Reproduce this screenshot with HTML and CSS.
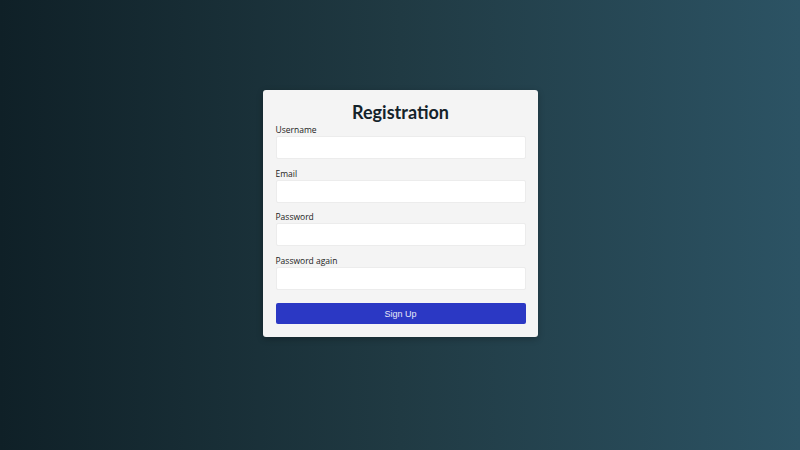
FILE: index.html
```html
<!DOCTYPE html>
<html lang="en">
<head>
  <meta charset="UTF-8" />
  <meta name="viewport" content="width=device-width, initial-scale=1.0" />
  <title>Registration</title>
  <link rel="stylesheet" href="styles.css">
</head>
<body>

  <div class="page">
    <form class="register-form" onsubmit="return false;">
      <h2>Registration</h2>

      <div class="field">
        <label for="username">Username</label>
        <input type="text" id="username" />
      </div>

      <div class="field">
        <label for="email">Email</label>
        <input type="email" id="email" />
      </div>

      <div class="field">
        <label for="password">Password</label>
        <input type="password" id="password" />
      </div>

      <div class="field">
        <label for="password2">Password again</label>
        <input type="password" id="password2" />
      </div>

      <button type="submit">Sign Up</button>
    </form>
  </div>

</body>
</html>
```

FILE: styles.css
```css
* { margin: 0; padding: 0; box-sizing: border-box; }

body {
  font-family: "Open Sans", sans-serif;
  background: linear-gradient(to right, #0f2027, #203a43, #2c5364);
  min-height: 100vh;
}

.page {
  min-height: 100vh;
  display: flex;
  justify-content: center;
  align-items: center;
  padding-bottom: 23px;
}

.register-form {
  width: 275px;
  background: #f4f4f4;
  padding: 10px 12px 13px 13px;
  border-radius: 3px;
  box-shadow: 0 2px 6px rgba(0, 0, 0, 0.25);
}

.register-form h2 {
  text-align: center;
  font-family: Lato, sans-serif;
  font-size: 18px;
  line-height: 24px;
  font-weight: 700;
  color: #14232a;
}

.field {
  margin-bottom: 8.5px;
}

label {
  display: block;
  font-size: 8.5px;
  line-height: 12px;
  color: #222;
}

input {
  display: block;
  width: 100%;
  height: 23px;
  border: 1px solid #ececec;
  border-radius: 2px;
  background: #fff;
  padding: 0 6px;
  outline: none;
}

/* margin collapses with the last field's margin-bottom */
button {
  display: block;
  width: 100%;
  height: 21px;
  margin-top: 13.5px;
  background: #2b38c4;
  border: none;
  border-radius: 2px;
  color: #e8e8f8;
  font-family: "Liberation Sans", Arial, sans-serif;
  font-size: 9px;
  cursor: pointer;
}
```
